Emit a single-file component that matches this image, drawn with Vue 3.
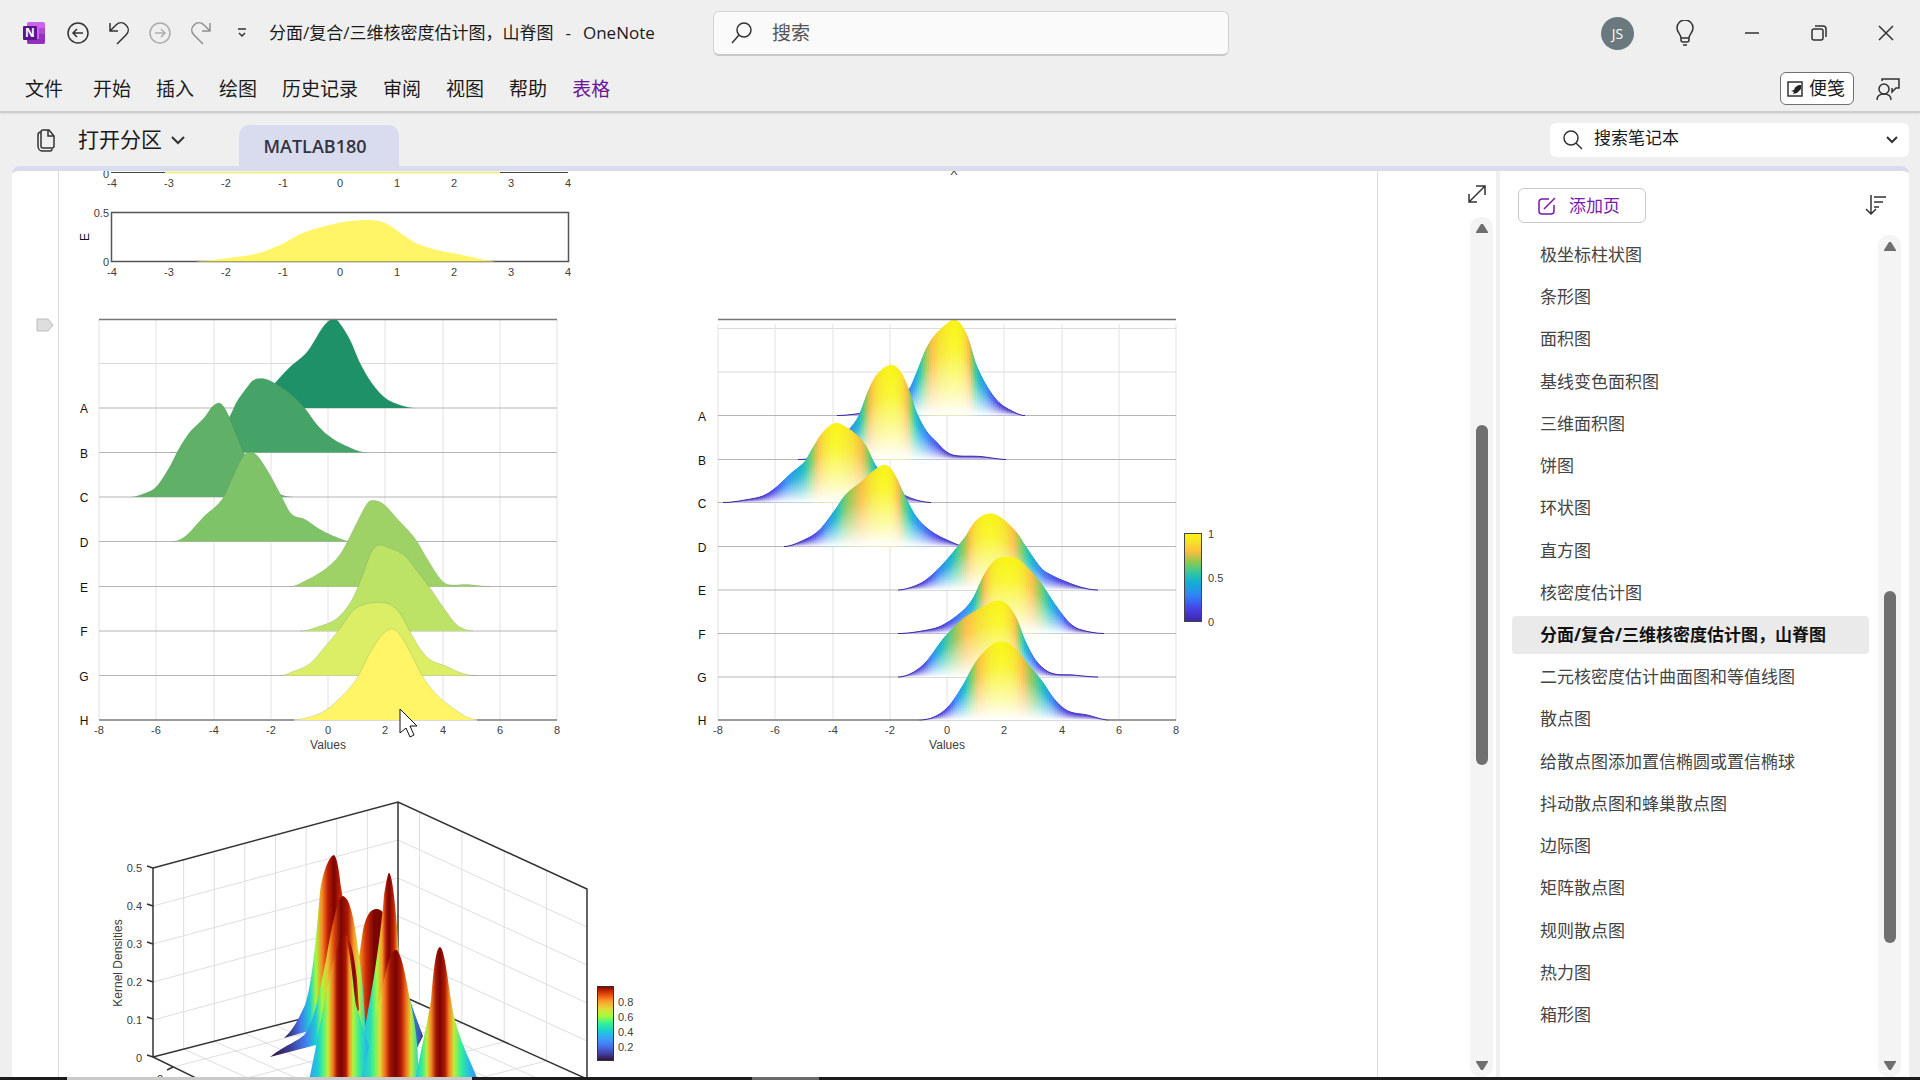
<template>
  <div class="app">
    <header class="titlebar">
      <div class="title-left">
        <svg class="logo" width="24" height="24" viewBox="0 0 24 24">
          <rect x="5" y="1" width="18" height="22" rx="2" fill="#ca64ea" />
          <path d="M17 7h6v6h-6z" fill="#ae4bd5" />
          <path d="M17 13h6v5h-6z" fill="#9332bf" />
          <path d="M5 18h18v3a2 2 0 0 1-2 2H7a2 2 0 0 1-2-2z" fill="#7719aa" opacity="0.7" />
          <rect x="1" y="5" width="14" height="14" rx="1" fill="#5c1390" />
          <text class="logo-letter" x="8" y="16" text-anchor="middle">N</text>
        </svg>
        <button class="quick" aria-label="返回">
          <svg width="24" height="24" viewBox="0 0 24 24">
            <circle cx="12" cy="12" r="10" />
            <path d="M17 12H7M11 8l-4 4 4 4" />
          </svg>
        </button>
        <button class="quick" aria-label="撤消">
          <svg width="24" height="24" viewBox="0 0 24 24">
            <path d="M3 2v8h8M3 10l6-6c3-3 7-3 10 0s3 7 0 10l-9 9" />
          </svg>
        </button>
        <button class="quick off" aria-label="前进">
          <svg width="24" height="24" viewBox="0 0 24 24">
            <circle cx="12" cy="12" r="10" />
            <path d="M7 12h10M13 8l4 4-4 4" />
          </svg>
        </button>
        <button class="quick off redo" aria-label="恢复">
          <svg width="24" height="24" viewBox="0 0 24 24">
            <path d="M21 2v8h-8M21 10l-6-6c-3-3-7-3-10 0s-3 7 0 10l9 9" />
          </svg>
        </button>
        <button class="quick" aria-label="自定义快速访问工具栏">
          <svg width="12" height="12" viewBox="0 0 12 12">
            <path d="M2 2h8M3 6l3 3 3-3" />
          </svg>
        </button>
        <div class="doc-title">
          <span>分面/复合/三维核密度估计图，山脊图</span>
          <span>-</span>
          <span>OneNote</span>
        </div>
      </div>

      <label class="main-search">
        <svg width="24" height="24" viewBox="0 0 24 24">
          <circle cx="14" cy="9" r="7" />
          <path d="M9 14l-7 8" />
        </svg>
        <input type="text" placeholder="搜索" aria-label="搜索" />
      </label>

      <div class="title-right">
        <button class="win" aria-label="帐户"><span class="avatar">JS</span></button>
        <button class="win" aria-label="提示">
          <svg width="20" height="26" viewBox="0 0 20 26">
            <path d="M6 18c0-4-4-5-4-10a8 8 0 0 1 16 0c0 5-4 6-4 10zM6 18v2c0 1 1 2 2 2h4c1 0 2-1 2-2v-2M8 25h4" />
          </svg>
        </button>
        <button class="win" aria-label="最小化">
          <svg width="16" height="16" viewBox="0 0 16 16"><path d="M1 8h14" /></svg>
        </button>
        <button class="win" aria-label="还原">
          <svg width="16" height="16" viewBox="0 0 16 16">
            <rect x="1" y="4" width="11" height="11" rx="2" />
            <path d="M4 1h8a3 3 0 0 1 3 3v8" />
          </svg>
        </button>
        <button class="win" aria-label="关闭">
          <svg width="16" height="16" viewBox="0 0 16 16"><path d="M1 1l14 14M15 1L1 15" /></svg>
        </button>
      </div>
    </header>

    <nav class="ribbon">
      <button
        v-for="tab in ribbonTabs"
        :key="tab"
        class="ribbon-tab"
        :class="{ context: tab === '表格' }"
      >
        {{ tab }}
      </button>
      <button class="sticky">
        <svg width="16" height="16" viewBox="0 0 16 16">
          <rect x="1" y="1" width="14" height="14" />
          <path class="solid" d="M14 4c-4 0-6 2-7 5l-3 1 3 1-1 2 4-1 4-4z" />
        </svg>
        <span>便笺</span>
      </button>
      <button class="share" aria-label="反馈">
        <svg width="24" height="24" viewBox="0 0 24 24">
          <circle cx="8" cy="12" r="5" />
          <path d="M1 23c0-4 3-6 7-6s7 2 7 6M6 4V2h17v9h-3l-4 4v-4" />
        </svg>
      </button>
    </nav>

    <div class="sections">
      <button class="open-section">
        <svg width="20" height="24" viewBox="0 0 20 24">
          <path d="M5 4a2 2 0 0 1 2-2h6l5 6v10a2 2 0 0 1-2 2H7a2 2 0 0 1-2-2zM12 2v6h6M5 4c-2 0-3 1-3 3v11c0 3 2 5 4 5h8c1 0 2-1 2-2" />
        </svg>
        <span>打开分区</span>
        <svg width="14" height="10" viewBox="0 0 14 10"><path class="bold" d="M1 2l6 6 6-6" /></svg>
      </button>
      <button class="section-tab">MATLAB180</button>
      <div class="notebook-search">
        <svg width="20" height="20" viewBox="0 0 20 20">
          <circle cx="8" cy="8" r="7" />
          <path d="M13 13l6 6" />
        </svg>
        <input type="text" placeholder="搜索笔记本" aria-label="搜索笔记本" />
        <button aria-label="搜索范围">
          <svg width="12" height="10" viewBox="0 0 12 10"><path class="bold" d="M1 2l5 5 5-5" /></svg>
        </button>
      </div>
    </div>

    <main class="workspace">
      <div class="paper">
        <svg class="plots" width="100%" height="100%">
          <defs>
            <linearGradient id="fade" x1="0" y1="0" x2="0" y2="1">
              <stop offset="0" stop-color="#fff" stop-opacity="0" />
              <stop offset="0.3" stop-color="#fff" stop-opacity="0.12" />
              <stop offset="0.7" stop-color="#fff" stop-opacity="0.6" />
              <stop offset="1" stop-color="#fff" stop-opacity="1" />
            </linearGradient>
            <linearGradient id="parula" x1="0" y1="1" x2="0" y2="0">
              <stop v-for="s in parula" :key="s[0]" :offset="s[0]" :stop-color="rgb(s)" />
            </linearGradient>
            <linearGradient id="turbo" x1="0" y1="1" x2="0" y2="0">
              <stop v-for="s in turbo" :key="s[0]" :offset="s[0]" :stop-color="rgb(s)" />
            </linearGradient>
            <linearGradient
              v-for="(p, i) in peaks"
              :id="'peak' + i"
              :key="i"
              gradientUnits="userSpaceOnUse"
              :x1="p.stops[0]"
              y1="0"
              :x2="p.stops[p.stops.length - 2]"
              y2="0"
            >
              <stop v-for="(s, j) in peakStops(p.stops)" :key="j" :offset="s[0]" :stop-color="s[1]" />
            </linearGradient>
            <clipPath v-for="(r, i) in rightRidges" :id="'clip' + i" :key="i">
              <path :d="r.area" />
            </clipPath>
          </defs>

          <g transform="translate(-12 -171)">
            <path d="M58.5 171V1100" stroke="#dcdcdc" />
            <path d="M37 319h11l5 6-5 6H37z" fill="#dedede" stroke="#bdbdbd" />
            <text class="tick" x="954" y="175" text-anchor="middle">X</text>

            <!-- facet densities -->
            <path d="M111 172.5H568" stroke="#444" />
            <path d="M165 172.5H500" stroke="#f0ef8a" stroke-width="2" />
            <text class="tick" x="109" y="178" text-anchor="end">0</text>
            <text v-for="i in 9" :key="'t' + i" class="tick" :x="55 + i * 57" y="187" text-anchor="middle">{{ i - 5 }}</text>
            <path d="M111.5 212.5H568.5V261.5H111.5z" fill="none" stroke="#555" stroke-width="1.5" />
            <path :d="facetArea" fill="#fff566" />
            <text class="tick" x="109" y="217" text-anchor="end">0.5</text>
            <text class="tick" x="109" y="266" text-anchor="end">0</text>
            <text v-for="i in 9" :key="'u' + i" class="tick" :x="55 + i * 57" y="276" text-anchor="middle">{{ i - 5 }}</text>
            <text class="name" transform="translate(89 237) rotate(-90)" text-anchor="middle">E</text>

            <!-- plain ridges -->
            <path v-for="x in leftTicks" :key="'g' + x" :d="`M${x} 320V720`" stroke="#e2e2e2" />
            <path d="M99 363.5H557" stroke="#dcdcdc" />
            <g v-for="r in leftRidges" :key="r.name">
              <path :d="`M99 ${r.base}H557`" stroke="#b5b5b5" />
              <path :d="r.area" :fill="r.color" />
              <path :d="r.line" fill="none" stroke="#54775a" stroke-opacity="0.2" />
              <text class="name" x="84" :y="r.base + 5" text-anchor="middle">{{ r.name }}</text>
            </g>
            <path d="M99 319.5H557" stroke="#777" stroke-width="1.5" />
            <path d="M99 720H294M477 720H557" stroke="#888" stroke-width="1.5" />
            <text v-for="(x, i) in leftTicks" :key="'v' + x" class="tick" :x="x" y="734" text-anchor="middle">{{ i * 2 - 8 }}</text>
            <text class="name soft" x="328" y="749" text-anchor="middle">Values</text>

            <!-- gradient ridges -->
            <path v-for="x in rightTicks" :key="'h' + x" :d="`M${x} 324V720`" stroke="#e2e2e2" />
            <path d="M718 328.5H1176M718 372H1176" stroke="#dcdcdc" />
            <g v-for="(r, i) in rightRidges" :key="r.name">
              <path :d="`M718 ${r.base}H1176`" stroke="#b5b5b5" />
              <g :clip-path="`url(#clip${i})`" shape-rendering="crispEdges">
                <template v-for="s in r.strips" :key="s.x">
                  <rect :x="s.x" :y="s.y" width="2" :height="s.h" :fill="s.fill" />
                  <rect :x="s.x" :y="s.y" width="2" :height="s.h" fill="url(#fade)" />
                </template>
              </g>
              <path v-for="s in r.edges" :key="s.d" :d="s.d" fill="none" :stroke="s.fill" />
              <text class="name" x="702" :y="r.base + 5" text-anchor="middle">{{ r.name }}</text>
            </g>
            <path d="M718 319.5H1176" stroke="#777" stroke-width="1.5" />
            <path d="M718 720H922M1106 720H1176" stroke="#888" stroke-width="1.5" />
            <text v-for="(x, i) in rightTicks" :key="'w' + x" class="tick" :x="x" y="734" text-anchor="middle">{{ i * 2 - 8 }}</text>
            <text class="name soft" x="947" y="749" text-anchor="middle">Values</text>
            <rect x="1184.5" y="533.5" width="17" height="88" fill="url(#parula)" stroke="#444" />
            <text class="tick" x="1208" y="538">1</text>
            <text class="tick" x="1208" y="582">0.5</text>
            <text class="tick" x="1208" y="626">0</text>

            <!-- 3D densities -->
            <path :d="boxGrid" fill="none" stroke="#dedede" />
            <path d="M153 868L398 802L587 889V1079L398 994M398 802V994L153 1057M153 868V1057L200 1080" fill="none" stroke="#333" stroke-width="1.5" />
            <path d="M147 866l6 2M147 904l6 2M147 942l6 2M147 980l6 2M147 1017l6 2M147 1055l6 2M167 1070l6-3" stroke="#333" stroke-width="1.5" />
            <path v-for="(p, i) in peaks" :key="'p' + i" :d="'M' + p.shape + 'Z'" :fill="`url(#peak${i})`" />
            <text v-for="i in 6" :key="'z' + i" class="tick" x="142" :y="834 + i * 38" text-anchor="end">{{ i === 6 ? '0' : (6 - i) / 10 }}</text>
            <text class="tick" x="160" y="1083" text-anchor="middle">2</text>
            <text class="name soft" transform="translate(122 963) rotate(-90)" text-anchor="middle">Kernel Densities</text>
            <rect x="597.5" y="986.5" width="16" height="74" fill="url(#turbo)" stroke="#333" />
            <text v-for="i in 4" :key="'c' + i" class="tick" x="618" :y="991 + i * 15">{{ (10 - i * 2) / 10 }}</text>

            <path class="pointer" d="M400 709v24l6-5 4 9 4-2-4-9h7z" />
          </g>
        </svg>
      </div>

      <div class="page-tools">
        <button class="expand" aria-label="全屏">
          <svg width="18" height="18" viewBox="0 0 18 18">
            <path d="M1 17L17 1M8 1h9v9M1 9v8h8" />
          </svg>
        </button>
        <div class="scroll">
          <svg width="12" height="10" viewBox="0 0 12 10"><path d="M5 1h2l5 8v1H0V9z" /></svg>
          <div class="track">
            <div class="thumb" :style="{ top: pageScroll.top + '%', height: pageScroll.size + '%' }"></div>
          </div>
          <svg width="12" height="10" viewBox="0 0 12 10"><path d="M5 9h2l5-8V0H0v1z" /></svg>
        </div>
      </div>

      <aside class="pages">
        <div class="pages-main">
          <div class="pages-head">
            <button class="add-page">
              <svg width="18" height="18" viewBox="0 0 18 18">
                <path d="M11 2H4a3 3 0 0 0-3 3v9a3 3 0 0 0 3 3h9a3 3 0 0 0 3-3V8M6 12L17 1" />
              </svg>
              <span>添加页</span>
            </button>
          </div>
          <nav class="page-list">
            <a
              v-for="(page, i) in pages"
              :key="page"
              href="#"
              :class="{ active: i === current }"
              @click.prevent="current = i"
            >
              {{ page }}
            </a>
          </nav>
        </div>
        <div class="pages-side">
          <button class="sort" aria-label="排序">
            <svg width="22" height="20" viewBox="0 0 22 20">
              <path d="M6 0v19M1 14l5 5 5-5M9 2h12M9 7h9M9 12h5" />
            </svg>
          </button>
          <div class="scroll">
            <svg width="12" height="10" viewBox="0 0 12 10"><path d="M5 1h2l5 8v1H0V9z" /></svg>
            <div class="track">
              <div class="thumb" :style="{ top: listScroll.top + '%', height: listScroll.size + '%' }"></div>
            </div>
            <svg width="12" height="10" viewBox="0 0 12 10"><path d="M5 9h2l5-8V0H0v1z" /></svg>
          </div>
        </div>
      </aside>
    </main>

    <footer class="taskbar">
      <span class="edge"></span>
      <span class="window"></span>
      <span class="gap"></span>
      <span class="item"></span>
    </footer>
  </div>
</template>

<script setup>
import { ref } from "vue";

const ribbonTabs = ["文件", "开始", "插入", "绘图", "历史记录", "审阅", "视图", "帮助", "表格"];

const pages = [
  "极坐标柱状图",
  "条形图",
  "面积图",
  "基线变色面积图",
  "三维面积图",
  "饼图",
  "环状图",
  "直方图",
  "核密度估计图",
  "分面/复合/三维核密度估计图，山脊图",
  "二元核密度估计曲面图和等值线图",
  "散点图",
  "给散点图添加置信椭圆或置信椭球",
  "抖动散点图和蜂巢散点图",
  "边际图",
  "矩阵散点图",
  "规则散点图",
  "热力图",
  "箱形图",
];
const current = ref(9);

const pageScroll = { top: 23.2, size: 41.1 };
const listScroll = { top: 42, size: 43.4 };

// [position, r, g, b]
const parula = [
  [0, 62, 38, 168],
  [0.15, 71, 67, 232],
  [0.3, 46, 135, 247],
  [0.45, 18, 177, 208],
  [0.55, 48, 198, 160],
  [0.68, 144, 200, 80],
  [0.8, 253, 190, 61],
  [0.9, 246, 225, 40],
  [1, 249, 245, 21],
];
const turbo = [
  [0, 48, 18, 59],
  [0.1, 65, 69, 171],
  [0.2, 70, 117, 237],
  [0.3, 57, 162, 252],
  [0.4, 27, 207, 212],
  [0.5, 50, 240, 150],
  [0.6, 164, 252, 59],
  [0.7, 225, 220, 55],
  [0.8, 254, 155, 45],
  [0.88, 235, 85, 15],
  [0.95, 190, 30, 2],
  [1, 122, 4, 2],
];

function rgb(s) {
  return `rgb(${s[1]}, ${s[2]}, ${s[3]})`;
}

function colorAt(map, t) {
  let i = 1;
  while (i < map.length - 1 && map[i][0] < t) i++;
  const a = map[i - 1];
  const b = map[i];
  const k = Math.min(1, Math.max(0, (t - a[0]) / (b[0] - a[0])));
  return rgb([0, 1, 2, 3].map((n) => (n ? Math.round(a[n] + (b[n] - a[n]) * k) : t)));
}

// nine axis positions from -8 to 8
function axisTicks(from, to) {
  return Array.from({ length: 9 }, (_, i) => Math.round(from + ((to - from) * i) / 8));
}
const leftTicks = axisTicks(99, 557);
const rightTicks = axisTicks(718, 1176);

// cubic interpolation through flat x, height pairs
function sample(flat) {
  const pts = [];
  for (let i = 0; i < flat.length; i += 2) pts.push([flat[i], flat[i + 1]]);
  const slope = pts.map((p, i) => {
    if (i === 0 || i === pts.length - 1) return 0;
    return (pts[i + 1][1] - pts[i - 1][1]) / (pts[i + 1][0] - pts[i - 1][0]);
  });
  const out = [];
  for (let i = 0; i < pts.length - 1; i++) {
    const [x0, y0] = pts[i];
    const [x1, y1] = pts[i + 1];
    const w = x1 - x0;
    for (let x = x0; x < x1; x++) {
      const t = (x - x0) / w;
      const t2 = t * t;
      const t3 = t2 * t;
      const h =
        (2 * t3 - 3 * t2 + 1) * y0 +
        (t3 - 2 * t2 + t) * w * slope[i] +
        (3 * t2 - 2 * t3) * y1 +
        (t3 - t2) * w * slope[i + 1];
      out.push([x, Math.max(0, h)]);
    }
  }
  out.push(pts[pts.length - 1]);
  return out;
}

function ridge(name, base, flat, color) {
  const pts = sample(flat);
  const line = "M" + pts.map(([x, h]) => `${x} ${(base - h).toFixed(1)}`).join("L");
  return { name, base, color, pts, line, area: line + "Z" };
}

function gradientRidge(name, base, flat) {
  const r = ridge(name, base, flat);
  const max = Math.max(...r.pts.map((p) => p[1]));
  const strips = [];
  const edges = [];
  for (let i = 0; i < r.pts.length - 2; i += 2) {
    const part = r.pts.slice(i, i + 3);
    const h = Math.max(...part.map((p) => p[1])) + 1;
    const fill = colorAt(parula, part[1][1] / max);
    strips.push({ x: part[0][0], y: base - h, h, fill });
    edges.push({
      fill,
      d: "M" + part.map(([x, v]) => `${x} ${(base - v).toFixed(1)}`).join("L"),
    });
  }
  return { ...r, strips, edges };
}

const facetArea = ridge("E", 261.5, [
  190, 0, 208, 1, 225, 3, 257, 8, 281, 17, 304, 29, 336, 38, 356, 41, 376, 41, 386, 38, 397, 31, 415, 19,
  435, 12, 455, 8, 474, 4, 498, 0,
]).area;

const leftRidges = [
  ridge("A", 408, [247, 0, 260, 8, 275, 25, 290, 41, 307, 56, 323, 81, 330, 88, 334, 89, 338, 87, 350, 68, 360, 45, 371, 26, 384, 11, 397, 4, 415, 0], "#1e9168"),
  ridge("B", 452.5, [171, 0, 196, 3, 216, 20, 229, 35, 237, 51, 247, 65, 253, 72, 260, 74, 267, 73, 275, 69, 290, 59, 305, 44, 316, 29, 327, 18, 343, 8, 367, 0], "#45a368"),
  ridge("C", 497, [131, 0, 143, 3, 156, 10, 169, 29, 180, 50, 190, 65, 204, 79, 212, 90, 219, 94, 224, 90, 230, 78, 237, 60, 245, 42, 260, 17, 277, 4, 293, 0], "#60b068"),
  ridge("D", 541.5, [172, 0, 185, 5, 204, 25, 222, 42, 233, 65, 243, 85, 250, 89, 257, 86, 268, 70, 280, 48, 291, 28, 305, 22, 320, 12, 337, 4, 351, 0], "#7fc368"),
  ridge("E", 586.5, [290, 0, 306, 6, 326, 18, 340, 32, 350, 50, 360, 70, 368, 84, 375, 86, 384, 82, 397, 68, 415, 48, 427, 28, 440, 8, 448, 2, 467, 2, 490, 0], "#9fd266"),
  ridge("F", 631, [300, 0, 320, 5, 336, 12, 350, 28, 360, 49, 370, 76, 375, 84, 381, 86, 387, 84, 404, 76, 414, 64, 430, 43, 443, 24, 455, 8, 464, 2, 473, 0], "#bce266"),
  ridge("G", 675.5, [280, 0, 293, 4, 310, 12, 326, 30, 340, 47, 353, 65, 364, 71, 377, 73, 390, 71, 400, 62, 410, 44, 420, 27, 430, 16, 447, 9, 460, 3, 475, 0], "#dcee66"),
  ridge("H", 720, [290, 0, 310, 3, 326, 10, 343, 25, 357, 42, 370, 67, 382, 85, 392, 91, 400, 85, 410, 68, 423, 43, 437, 25, 453, 12, 467, 3, 480, 0], "#fff566"),
];

const rightRidges = [
  gradientRidge("A", 415.5, [837, 0, 859, 2, 880, 7, 895, 14, 909, 26, 916, 41, 926, 66, 934, 79, 944, 89, 953, 95, 960, 92, 968, 77, 976, 51, 987, 29, 998, 14, 1009, 6, 1025, 0]),
  gradientRidge("B", 459.5, [798, 0, 816, 3, 836, 16, 850, 31, 859, 44, 869, 70, 878, 86, 891, 94, 900, 88, 909, 69, 916, 48, 926, 29, 937, 17, 946, 8, 955, 4, 980, 3, 1007, 0]),
  gradientRidge("C", 502.5, [723, 0, 748, 3, 764, 7, 776, 15, 791, 29, 805, 41, 812, 53, 823, 70, 835, 79, 846, 75, 857, 67, 866, 56, 875, 38, 891, 18, 907, 6, 932, 0]),
  gradientRidge("D", 546.5, [784, 0, 803, 6, 819, 16, 834, 35, 846, 52, 862, 65, 873, 75, 884, 81, 892, 76, 905, 50, 916, 30, 930, 16, 948, 6, 966, 0]),
  gradientRidge("E", 590, [898, 0, 912, 3, 926, 10, 944, 27, 959, 45, 966, 54, 976, 69, 989, 76, 1001, 72, 1016, 58, 1026, 43, 1041, 22, 1051, 15, 1069, 7, 1084, 2, 1098, 0]),
  gradientRidge("F", 633.5, [898, 0, 930, 4, 944, 9, 962, 22, 973, 35, 984, 58, 994, 72, 1005, 76, 1018, 74, 1028, 65, 1041, 50, 1055, 29, 1069, 11, 1080, 4, 1105, 0]),
  gradientRidge("G", 677, [898, 0, 912, 4, 926, 15, 944, 39, 962, 57, 976, 66, 987, 72, 998, 76, 1007, 72, 1016, 59, 1026, 34, 1037, 15, 1051, 4, 1073, 2, 1098, 0]),
  gradientRidge("H", 720, [919, 0, 934, 3, 948, 13, 962, 33, 976, 58, 991, 74, 1001, 78, 1012, 74, 1026, 58, 1041, 40, 1055, 20, 1068, 9, 1087, 5, 1109, 0]),
];

const peaks = [
  {
    shape: "284 1038C293 1030 298 1020 305 1005C312 985 316 940 320 892C323 870 330 855 334 855C338 858 340 880 341 887C346 915 352 980 358 1017Z",
    stops: [284, 0, 300, 0.2, 310, 0.4, 316, 0.6, 322, 0.82, 328, 0.95, 334, 1, 340, 0.95, 350, 0.8, 358, 0.5],
  },
  {
    shape: "350 1020C356 980 360 950 363 930C367 913 371 909 377 909C383 909 390 920 396 945C404 985 413 1010 423 1036L417 1048Z",
    stops: [350, 0.7, 360, 0.82, 366, 0.93, 374, 1, 384, 1, 396, 0.7, 408, 0.4, 414, 0.2, 423, 0.05],
  },
  {
    shape: "362 1040C370 1005 380 945 384 895C387 878 388 873 389 873C392 873 396 905 399 955C404 990 412 1010 422 1035L400 1078H362Z",
    stops: [362, 0.35, 371, 0.45, 377, 0.6, 382, 0.8, 386, 0.96, 389, 1, 394, 0.94, 398, 0.75, 404, 0.4, 422, 0.1],
  },
  {
    shape: "270 1057C287 1044 297 1042 305 1034C315 1020 320 988 326 960C332 925 338 896 343 896C351 898 355 925 359 955C363 985 366 1010 366 1078H316L316 1045Z",
    stops: [270, 0, 290, 0.08, 306, 0.22, 316, 0.4, 322, 0.6, 328, 0.75, 334, 0.9, 341, 1, 348, 0.96, 354, 0.8, 359, 0.65, 366, 0.4],
  },
  {
    shape: "346 935C351 940 354 955 357 980L359 1010L350 1020Z",
    stops: [340, 0.8, 348, 0.95, 354, 1, 360, 0.9],
  },
  {
    shape: "309 1080C316 1050 322 1010 328 985C333 960 338 940 344 935C350 942 353 985 356 1005C362 1025 366 1036 370 1050V1080Z",
    stops: [309, 0.28, 318, 0.4, 323, 0.52, 328, 0.65, 333, 0.84, 337, 0.97, 341, 1, 346, 0.96, 349, 0.82, 353, 0.62, 360, 0.48, 366, 0.36, 370, 0.32],
  },
  {
    shape: "361 1080C369 1050 377 1010 383 985C388 962 391 950 396 950C402 951 407 985 412 1010C416 1030 419 1050 418 1080Z",
    stops: [361, 0.34, 370, 0.45, 375, 0.55, 380, 0.7, 385, 0.85, 390, 0.97, 396, 1, 401, 0.96, 406, 0.85, 411, 0.66, 418, 0.45],
  },
  {
    shape: "415 1080C421 1050 427 1025 431 1000C434 960 437 947 440 947C444 947 448 980 451 1000C456 1035 468 1055 478 1080Z",
    stops: [415, 0.38, 422, 0.5, 427, 0.65, 431, 0.82, 436, 0.97, 440, 1, 445, 0.96, 449, 0.83, 454, 0.65, 461, 0.5, 469, 0.36, 478, 0.25],
  },
];

function peakStops(flat) {
  const start = flat[0];
  const span = flat[flat.length - 2] - start;
  const out = [];
  for (let i = 0; i < flat.length; i += 2) {
    out.push([(flat[i] - start) / span, colorAt(turbo, flat[i + 1])]);
  }
  return out;
}

// wall and floor lines of the 3D box
function makeBoxGrid() {
  let d = "";
  for (let i = 1; i < 8; i++) {
    const k = i / 8;
    const x = 153 + 245 * k;
    const top = 868 - 66 * k;
    const low = 1057 - 63 * k;
    d += `M${x} ${top}V${low}l189 85`;
  }
  for (let i = 0; i < 4; i++) {
    const k = 0.114 + i * 0.224;
    const x = 398 + 189 * k;
    const top = 802 + 87 * k;
    const low = 994 + 85 * k;
    d += `M${x} ${top}V${low}l-245 63`;
  }
  for (let i = 1; i < 5; i++) {
    d += `M153 ${868 + i * 38}L398 ${802 + i * 38}L587 ${889 + i * 38}`;
  }
  return d;
}
const boxGrid = makeBoxGrid();
</script>

<style>
body {
  margin: 0;
}
</style>

<style scoped>
.app {
  display: flex;
  flex-direction: column;
  height: 100vh;
  overflow: hidden;
  background: #efefef;
  color: #1a1a1a;
  font-family: "Open Sans", "Noto Sans CJK SC", sans-serif;
}

button,
input {
  font-family: inherit;
  color: inherit;
  border: none;
  background: none;
  padding: 0;
  margin: 0;
}

button svg,
label svg,
.notebook-search svg {
  flex: none;
  fill: none;
  stroke: #333;
  stroke-width: 1.5;
}

.bold {
  stroke-width: 2;
}

.solid {
  fill: #222;
  stroke: none;
}

.titlebar {
  flex: none;
  display: grid;
  grid-template-columns: 1fr 516px 1fr;
  align-items: center;
  height: 66px;
  padding-left: 22px;
}

.title-left,
.title-right {
  display: flex;
  align-items: center;
}

.title-right {
  justify-content: flex-end;
  padding-right: 1px;
}

.logo {
  margin-right: 11px;
}

.logo-letter {
  font-size: 12px;
  font-weight: 700;
  fill: #fff;
}

.quick {
  display: flex;
  justify-content: center;
  width: 41px;
}

.off {
  opacity: 0.35;
}

.redo {
  opacity: 0.5;
}

.doc-title {
  display: flex;
  gap: 12px;
  margin-left: 7px;
  font-size: 17px;
  line-height: 24px;
  white-space: nowrap;
}

.main-search {
  display: flex;
  align-items: center;
  gap: 18px;
  box-sizing: border-box;
  height: 45px;
  padding: 0 16px;
  background: #fafafa;
  border: 1px solid #d2d2d2;
  border-bottom: 2px solid #c8c8c8;
  border-radius: 6px;
}

.main-search input {
  flex: 1;
  font-size: 19px;
}

input::placeholder {
  color: #555;
  opacity: 1;
}

.win {
  display: flex;
  justify-content: center;
  align-items: center;
  width: 67px;
  height: 66px;
}

.avatar {
  width: 33px;
  border-radius: 50%;
  background: #69797e;
  color: #fff;
  font-size: 14px;
  line-height: 33px;
}

.ribbon {
  flex: none;
  display: flex;
  align-items: center;
  height: 45px;
  padding: 0 20px 0 25px;
  border-bottom: 2px solid #cdcdcd;
  box-shadow: 0 1px 2px #dcdcdc;
}

.ribbon-tab {
  margin-right: 25px;
  font-size: 19px;
  line-height: 24px;
}

.ribbon-tab:first-child {
  margin-right: 30px;
}

.context {
  color: #6b159c;
}

.sticky {
  display: flex;
  align-items: center;
  gap: 6px;
  box-sizing: border-box;
  height: 33px;
  margin-left: auto;
  padding: 0 8px 0 6px;
  background: #fff;
  border: 1px solid #707070;
  border-radius: 6px;
  font-size: 18px;
}

.sticky span {
  padding-bottom: 4px;
}

.share {
  display: flex;
  margin-left: 22px;
}

.sections {
  flex: none;
  display: flex;
  align-items: flex-end;
  height: 53px;
  padding: 0 11px 0 36px;
}

.open-section {
  display: flex;
  align-items: center;
  align-self: center;
  font-size: 21px;
  line-height: 28px;
}

.open-section span {
  margin: 0 9px 2px 22px;
}

.section-tab {
  width: 160px;
  height: 41px;
  margin-left: 54px;
  padding-right: 8px;
  background: #d9dbef;
  border-radius: 10px 10px 0 0;
  font-size: 18px;
  font-weight: 600;
  color: #33333f;
}

.notebook-search {
  display: flex;
  align-items: center;
  gap: 11px;
  align-self: center;
  box-sizing: border-box;
  width: 359px;
  height: 34px;
  margin-left: auto;
  padding: 0 11px 0 13px;
  background: #fff;
  border-radius: 6px;
}

.notebook-search input {
  flex: 1;
  min-width: 0;
  padding-bottom: 4px;
  font-size: 17px;
}

.notebook-search input::placeholder {
  color: #1a1a1a;
}

.workspace {
  flex: 1;
  min-height: 0;
  display: flex;
  margin: 0 11px 0 12px;
  border-top: 5px solid #d9dbef;
  border-radius: 8px 8px 0 0;
  background: #fff;
}

.paper {
  flex: 1;
  min-width: 0;
  overflow: hidden;
  border-right: 1px solid #dcdcdc;
}

.plots {
  display: block;
}

.tick {
  font: 11px "Liberation Sans", sans-serif;
  fill: #404040;
}

.name {
  font: 12px "Liberation Sans", sans-serif;
  fill: #111;
}

.soft {
  fill: #404040;
}

.pointer {
  fill: #fff;
  stroke: #111;
}

.page-tools {
  display: flex;
  flex-direction: column;
  align-items: flex-end;
  box-sizing: border-box;
  width: 118px;
  padding-right: 3px;
}

.expand {
  display: flex;
  justify-content: center;
  align-items: center;
  width: 32px;
  height: 46px;
}

.scroll {
  flex: 1;
  display: flex;
  flex-direction: column;
  align-items: center;
  box-sizing: border-box;
  width: 23px;
  padding: 6px 0;
  background: #f4f4f4;
  border-radius: 11px;
}

.scroll svg {
  fill: #6f6f6f;
}

.track {
  position: relative;
  flex: 1;
  width: 12px;
}

.thumb {
  position: absolute;
  width: 12px;
  background: #707070;
  border-radius: 6px;
}

.pages {
  display: flex;
  box-sizing: border-box;
  width: 413px;
  padding: 0 8px 0 12px;
  border-left: 4px solid #efefef;
}

.pages-main {
  flex: 1;
  display: flex;
  flex-direction: column;
}

.pages-head {
  padding: 17px 0 13px 6px;
}

.add-page {
  display: flex;
  align-items: center;
  gap: 13px;
  box-sizing: border-box;
  height: 35px;
  padding: 0 25px 0 19px;
  background: #fff;
  border: 1px solid #c8c8c8;
  border-radius: 6px;
  font-size: 17px;
  color: #7719aa;
}

.add-page span {
  padding-bottom: 2px;
}

.add-page svg {
  stroke: #7719aa;
}

.page-list {
  flex: 1;
  display: flex;
  flex-direction: column;
  justify-content: space-between;
  padding-bottom: 43px;
}

.page-list a {
  width: 329px;
  padding-left: 28px;
  border-radius: 4px;
  font-size: 17px;
  line-height: 38px;
  color: #444;
  text-decoration: none;
  white-space: nowrap;
}

.page-list .active {
  background: #eaeaea;
  color: #111;
  font-weight: 700;
}

.pages-side {
  flex: none;
  display: flex;
  flex-direction: column;
  align-items: flex-end;
  width: 32px;
}

.sort {
  display: flex;
  align-items: center;
  justify-content: center;
  width: 36px;
  height: 64px;
  padding: 4px 14px 0 0;
  box-sizing: border-box;
}

.taskbar {
  flex: none;
  display: flex;
  height: 3px;
  background: #1c1c1c;
}

.edge {
  width: 67px;
}

.window {
  width: 405px;
  background: #cacaca;
}

.gap {
  width: 280px;
}

.item {
  width: 67px;
  background: #6a6a6a;
}
</style>
